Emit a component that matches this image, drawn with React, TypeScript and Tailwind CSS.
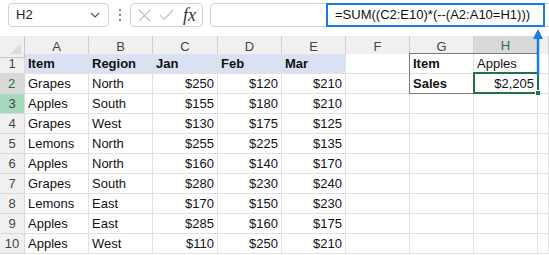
import React from 'react'

const cols = ['A', 'B', 'C', 'D', 'E', 'F', 'G', 'H', '']

const data: string[][] = [
  ['Grapes', 'North', '$250', '$120', '$210'],
  ['Apples', 'South', '$155', '$180', '$210'],
  ['Grapes', 'West', '$130', '$175', '$125'],
  ['Lemons', 'North', '$255', '$225', '$135'],
  ['Apples', 'North', '$160', '$140', '$170'],
  ['Grapes', 'South', '$280', '$230', '$240'],
  ['Lemons', 'East', '$170', '$150', '$230'],
  ['Apples', 'East', '$285', '$160', '$175'],
  ['Apples', 'West', '$110', '$250', '$210'],
]

const gridCols = 'grid grid-cols-[25px_64px_64px_65px_64px_64px_64px_64px_64px_11px]'

function Cell({ children, right, bold, blue }: { children?: React.ReactNode; right?: boolean; bold?: boolean; blue?: boolean }) {
  return (
    <div
      className={`h-[20px] flex items-end pb-[2px] px-[3px] border-r border-b border-[#e1e1e1] text-[13px] leading-[15px] text-[#111] whitespace-nowrap overflow-hidden ${
        right ? 'justify-end' : ''
      } ${bold ? 'font-bold' : ''} ${blue ? 'bg-[#d9e1f2]' : 'bg-white'}`}
    >
      {children}
    </div>
  )
}

function RowHead({ n }: { n: number }) {
  let cls = 'bg-[#f0f0f0] text-[#444] border-r border-[#c8c8c8]'
  if (n === 2) cls = 'bg-[#d9d9d9] text-[#217346] border-r-2 border-[#217346]'
  if (n === 3) cls = 'bg-[#a6d8bb] text-[#444] border-r border-[#c8c8c8]'
  return (
    <div className={`h-[20px] flex items-end justify-center pb-[2px] border-b border-[#dadada] text-[13px] leading-[15px] ${cls}`}>
      {n}
    </div>
  )
}

export default function App() {
  const rows: { cells: string[]; bold?: boolean; blue?: boolean }[] = [
    { cells: ['Item', 'Region', 'Jan', 'Feb', 'Mar', '', 'Item', 'Apples', ''], bold: true, blue: true },
    { cells: ['Grapes', 'North', '$250', '$120', '$210', '', 'Sales', '$2,205', ''] },
    ...data.slice(1).map((r) => ({ cells: [...r, '', '', '', ''] })),
  ]

  return (
    <div className="relative w-[549px] h-[255px] bg-white overflow-hidden font-['Liberation_Sans',Arial,sans-serif]">
      {/* formula bar */}
      <div className="flex items-center h-[36px] pt-[3px] pb-[9px] pl-[8px]">
        <div className="w-[101px] h-[24px] flex items-center justify-between px-[7px] border border-[#d1d1d1] rounded-[4px] text-[13px] text-[#222]">
          <span>H2</span>
          <svg width="12" height="12" viewBox="0 0 12 12" fill="none" stroke="#555" strokeWidth="1.2">
            <path d="M2 4l4 4 4-4" />
          </svg>
        </div>
        <div className="w-[21px] flex flex-col items-center gap-[3px]">
          <span className="w-[2px] h-[2px] bg-[#888]" />
          <span className="w-[2px] h-[2px] bg-[#888]" />
          <span className="w-[2px] h-[2px] bg-[#888]" />
        </div>
        <div className="w-[73px] h-[24px] flex items-center gap-[8px] pl-[7px] border border-[#d1d1d1] rounded-[4px]">
          <svg width="13" height="13" viewBox="0 0 13 13" stroke="#bdbdbd" strokeWidth="1.1">
            <path d="M1 1l11 11M12 1L1 12" />
          </svg>
          <svg width="15" height="12" viewBox="0 0 15 12" fill="none" stroke="#bdbdbd" strokeWidth="1.1">
            <path d="M1 6l4 4.5L14 1" />
          </svg>
          <span className="font-['Liberation_Serif',serif] italic text-[18px] leading-[18px] text-[#333] ml-[1px]">fx</span>
        </div>
        <div className="ml-[7px] flex-1 h-[24px] border border-[#d1d1d1] rounded-[4px] mr-[-6px]" />
      </div>

      {/* column headers */}
      <div className={`${gridCols} h-[18px]`}>
        <div className="relative bg-[#f0f0f0] border-r border-b border-[#c8c8c8]">
          <div className="absolute right-[3px] bottom-[3px] w-0 h-0 border-l-[11px] border-l-transparent border-b-[11px] border-b-[#dcdcdc]" />
        </div>
        {cols.map((c, i) =>
          c === 'H' ? (
            <div key={i} className="flex items-center justify-center bg-[#d9d9d9] border-r border-[#d0d0d0] border-b-2 border-b-[#217346] text-[13px] text-[#217346]">
              {c}
            </div>
          ) : (
            <div key={i} className="flex items-center justify-center bg-[#f0f0f0] border-r border-b border-[#d0d0d0] text-[13px] text-[#444]">
              {c}
            </div>
          ),
        )}
      </div>

      {/* rows */}
      {rows.map((r, ri) => (
        <div key={ri} className={gridCols}>
          <RowHead n={ri + 1} />
          {r.cells.map((v, ci) => (
            <Cell
              key={ci}
              right={v.startsWith('$')}
              bold={r.bold ? ci < 5 || ci === 6 : ci === 6 && ri === 1}
              blue={r.blue && ci < 5}
            >
              {v}
            </Cell>
          ))}
        </div>
      ))}

      {/* G1:H2 box */}
      <div className="absolute left-[409px] top-[53px] w-[130px] h-[41px] border border-[#7a7a7a] pointer-events-none" />
      {/* selection H2 */}
      <div className="absolute left-[473px] top-[72px] w-[66px] h-[22px] border-2 border-[#217346] pointer-events-none" />
      <div className="absolute left-[535px] top-[90px] w-[6px] h-[6px] bg-[#217346] border border-white" />

      {/* annotation */}
      <div className="absolute left-[326px] top-[3px] w-[219px] h-[24px] border-2 border-[#1a7ce6] bg-white flex items-center pl-[7px] text-[13px] text-[#111] whitespace-nowrap">
        =SUM((C2:E10)*(--(A2:A10=H1)))
      </div>
      <svg className="absolute left-[532px] top-[28px]" width="12" height="48" viewBox="0 0 12 48">
        <path d="M6 4v44" stroke="#1a7ce6" strokeWidth="2.5" />
        <path d="M6 1L11 11H1z" fill="#1a7ce6" />
      </svg>
    </div>
  )
}
